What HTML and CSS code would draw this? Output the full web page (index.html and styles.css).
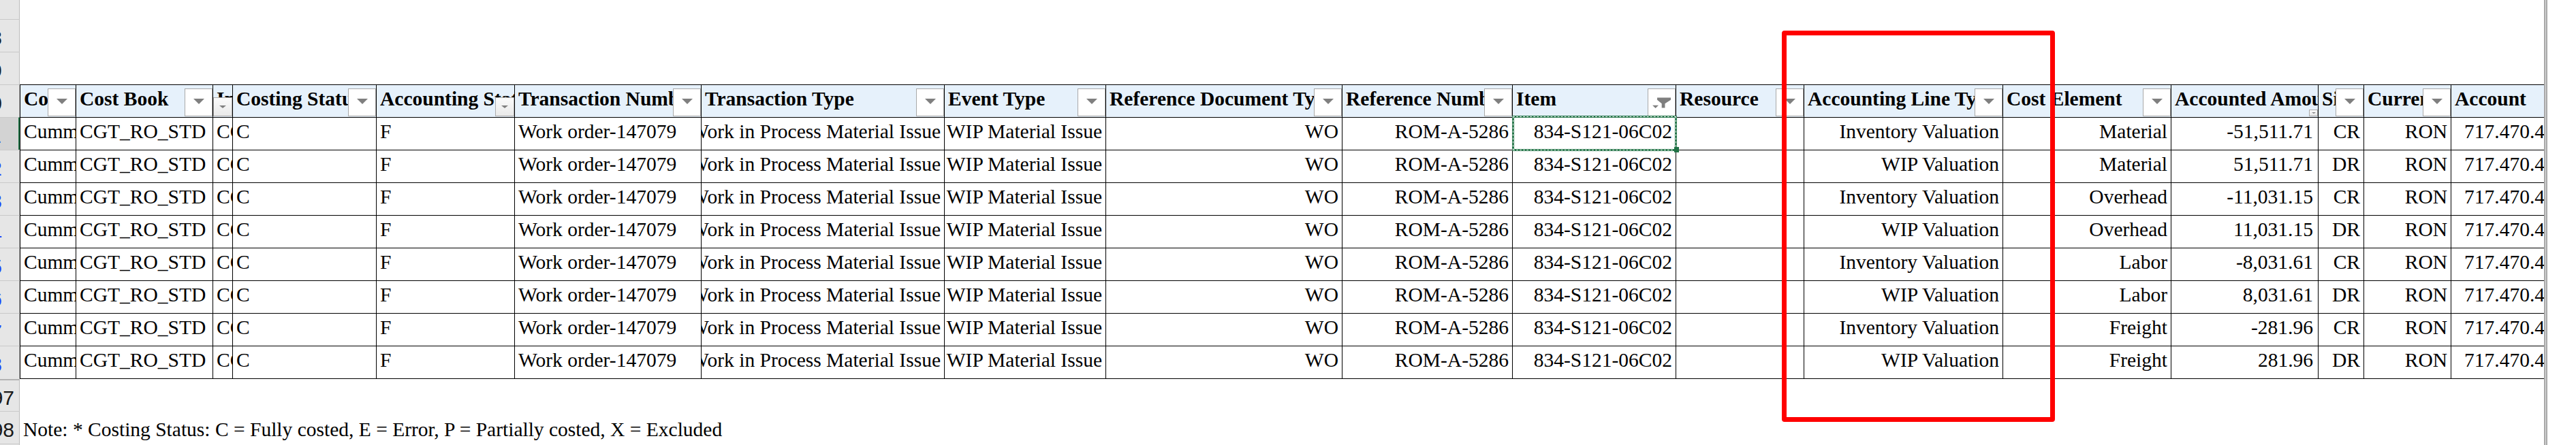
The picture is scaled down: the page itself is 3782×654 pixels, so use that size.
FILE: index.html
```html
<!DOCTYPE html>
<html lang="en">
<head>
<meta charset="utf-8">
<title>Cost Accounting Distributions</title>
<link rel="stylesheet" href="styles.css">
</head>
<body>
<div class="window">
  <div class="sheet">
    <div class="row top"><div class="rh"></div><div class="blank"></div></div>
    <div class="row"><div class="rh"><span>1088</span></div><div class="blank"></div></div>
    <div class="row"><div class="rh"><span>1089</span></div><div class="blank"></div></div>

    <div class="row thead">
      <div class="rh"><span>1090</span></div>
      <div class="c h a"><span>Cost Organization</span><span class="dd"></span></div>
      <div class="c h"><span>Cost Book</span><span class="dd"></span></div>
      <div class="c h"><span>Inventory Organization</span><span class="dd s"></span></div>
      <div class="c h"><span>Costing Status</span><span class="dd"></span></div>
      <div class="c h"><span>Accounting Status</span><span class="dd s"></span></div>
      <div class="c h"><span>Transaction Number</span><span class="dd"></span></div>
      <div class="c h"><span>Transaction Type</span><span class="dd"></span></div>
      <div class="c h"><span>Event Type</span><span class="dd"></span></div>
      <div class="c h"><span>Reference Document Type</span><span class="dd"></span></div>
      <div class="c h"><span>Reference Number</span><span class="dd"></span></div>
      <div class="c h"><span>Item</span><span class="dd fl"><svg viewBox="0 0 41 41" width="39" height="39"><path d="M13.7 13.2H34.7V16.6L25.7 22.4V28.8H20.7V22.4L13.7 16.6Z" fill="#7f7f7f"/><path d="M6.4 25H15.8L11.1 29.4Z" fill="#7f7f7f"/></svg></span></div>
      <div class="c h"><span>Resource</span><span class="dd"></span></div>
      <div class="c h"><span>Accounting Line Type</span><span class="dd"></span></div>
      <div class="c h"><span>Cost Element</span><span class="dd"></span></div>
      <div class="c h"><span>Accounted Amount</span><span class="dd t"></span></div>
      <div class="c h"><span>Side</span><span class="dd"></span></div>
      <div class="c h"><span>Currency</span><span class="dd"></span></div>
      <div class="c h"><span>Account</span></div>
    </div>

    <div class="row">
      <div class="rh f act"><span>1091</span></div>
      <div class="c a"><span>Cummins</span></div><div class="c"><span>CGT_RO_STD</span></div><div class="c"><span>CGT</span></div><div class="c"><span>C</span></div><div class="c"><span>F</span></div><div class="c"><span>Work order-147079</span></div>
      <div class="c r"><span>Work in Process Material Issue</span></div><div class="c r"><span>WIP Material Issue</span></div><div class="c r"><span>WO</span></div><div class="c r"><span>ROM-A-5286</span></div>
      <div class="c r sel"><span>834-S121-06C02</span><span class="ants"></span></div><div class="c"></div>
      <div class="c r"><span>Inventory Valuation</span></div><div class="c r"><span>Material</span></div><div class="c r amt"><span>-51,511.71</span></div><div class="c r"><span>CR</span></div><div class="c r"><span>RON</span></div><div class="c acct"><span>717.470.400</span></div>
    </div>
    <div class="row">
      <div class="rh f"><span>1092</span></div>
      <div class="c a"><span>Cummins</span></div><div class="c"><span>CGT_RO_STD</span></div><div class="c"><span>CGT</span></div><div class="c"><span>C</span></div><div class="c"><span>F</span></div><div class="c"><span>Work order-147079</span></div>
      <div class="c r"><span>Work in Process Material Issue</span></div><div class="c r"><span>WIP Material Issue</span></div><div class="c r"><span>WO</span></div><div class="c r"><span>ROM-A-5286</span></div>
      <div class="c r"><span>834-S121-06C02</span></div><div class="c"></div>
      <div class="c r"><span>WIP Valuation</span></div><div class="c r"><span>Material</span></div><div class="c r amt"><span>51,511.71</span></div><div class="c r"><span>DR</span></div><div class="c r"><span>RON</span></div><div class="c acct"><span>717.470.400</span></div>
    </div>
    <div class="row">
      <div class="rh f"><span>1093</span></div>
      <div class="c a"><span>Cummins</span></div><div class="c"><span>CGT_RO_STD</span></div><div class="c"><span>CGT</span></div><div class="c"><span>C</span></div><div class="c"><span>F</span></div><div class="c"><span>Work order-147079</span></div>
      <div class="c r"><span>Work in Process Material Issue</span></div><div class="c r"><span>WIP Material Issue</span></div><div class="c r"><span>WO</span></div><div class="c r"><span>ROM-A-5286</span></div>
      <div class="c r"><span>834-S121-06C02</span></div><div class="c"></div>
      <div class="c r"><span>Inventory Valuation</span></div><div class="c r"><span>Overhead</span></div><div class="c r amt"><span>-11,031.15</span></div><div class="c r"><span>CR</span></div><div class="c r"><span>RON</span></div><div class="c acct"><span>717.470.400</span></div>
    </div>
    <div class="row">
      <div class="rh f"><span>1094</span></div>
      <div class="c a"><span>Cummins</span></div><div class="c"><span>CGT_RO_STD</span></div><div class="c"><span>CGT</span></div><div class="c"><span>C</span></div><div class="c"><span>F</span></div><div class="c"><span>Work order-147079</span></div>
      <div class="c r"><span>Work in Process Material Issue</span></div><div class="c r"><span>WIP Material Issue</span></div><div class="c r"><span>WO</span></div><div class="c r"><span>ROM-A-5286</span></div>
      <div class="c r"><span>834-S121-06C02</span></div><div class="c"></div>
      <div class="c r"><span>WIP Valuation</span></div><div class="c r"><span>Overhead</span></div><div class="c r amt"><span>11,031.15</span></div><div class="c r"><span>DR</span></div><div class="c r"><span>RON</span></div><div class="c acct"><span>717.470.400</span></div>
    </div>
    <div class="row">
      <div class="rh f"><span>1095</span></div>
      <div class="c a"><span>Cummins</span></div><div class="c"><span>CGT_RO_STD</span></div><div class="c"><span>CGT</span></div><div class="c"><span>C</span></div><div class="c"><span>F</span></div><div class="c"><span>Work order-147079</span></div>
      <div class="c r"><span>Work in Process Material Issue</span></div><div class="c r"><span>WIP Material Issue</span></div><div class="c r"><span>WO</span></div><div class="c r"><span>ROM-A-5286</span></div>
      <div class="c r"><span>834-S121-06C02</span></div><div class="c"></div>
      <div class="c r"><span>Inventory Valuation</span></div><div class="c r"><span>Labor</span></div><div class="c r amt"><span>-8,031.61</span></div><div class="c r"><span>CR</span></div><div class="c r"><span>RON</span></div><div class="c acct"><span>717.470.400</span></div>
    </div>
    <div class="row">
      <div class="rh f"><span>1096</span></div>
      <div class="c a"><span>Cummins</span></div><div class="c"><span>CGT_RO_STD</span></div><div class="c"><span>CGT</span></div><div class="c"><span>C</span></div><div class="c"><span>F</span></div><div class="c"><span>Work order-147079</span></div>
      <div class="c r"><span>Work in Process Material Issue</span></div><div class="c r"><span>WIP Material Issue</span></div><div class="c r"><span>WO</span></div><div class="c r"><span>ROM-A-5286</span></div>
      <div class="c r"><span>834-S121-06C02</span></div><div class="c"></div>
      <div class="c r"><span>WIP Valuation</span></div><div class="c r"><span>Labor</span></div><div class="c r amt"><span>8,031.61</span></div><div class="c r"><span>DR</span></div><div class="c r"><span>RON</span></div><div class="c acct"><span>717.470.400</span></div>
    </div>
    <div class="row">
      <div class="rh f"><span>1097</span></div>
      <div class="c a"><span>Cummins</span></div><div class="c"><span>CGT_RO_STD</span></div><div class="c"><span>CGT</span></div><div class="c"><span>C</span></div><div class="c"><span>F</span></div><div class="c"><span>Work order-147079</span></div>
      <div class="c r"><span>Work in Process Material Issue</span></div><div class="c r"><span>WIP Material Issue</span></div><div class="c r"><span>WO</span></div><div class="c r"><span>ROM-A-5286</span></div>
      <div class="c r"><span>834-S121-06C02</span></div><div class="c"></div>
      <div class="c r"><span>Inventory Valuation</span></div><div class="c r"><span>Freight</span></div><div class="c r amt"><span>-281.96</span></div><div class="c r"><span>CR</span></div><div class="c r"><span>RON</span></div><div class="c acct"><span>717.470.400</span></div>
    </div>
    <div class="row last">
      <div class="rh f"><span>1098</span></div>
      <div class="c a"><span>Cummins</span></div><div class="c"><span>CGT_RO_STD</span></div><div class="c"><span>CGT</span></div><div class="c"><span>C</span></div><div class="c"><span>F</span></div><div class="c"><span>Work order-147079</span></div>
      <div class="c r"><span>Work in Process Material Issue</span></div><div class="c r"><span>WIP Material Issue</span></div><div class="c r"><span>WO</span></div><div class="c r"><span>ROM-A-5286</span></div>
      <div class="c r"><span>834-S121-06C02</span></div><div class="c"></div>
      <div class="c r"><span>WIP Valuation</span></div><div class="c r"><span>Freight</span></div><div class="c r amt"><span>281.96</span></div><div class="c r"><span>DR</span></div><div class="c r"><span>RON</span></div><div class="c acct"><span>717.470.400</span></div>
    </div>

    <div class="row after"><div class="rh wide gap"><span>1197</span></div><div class="blank"></div></div>
    <div class="row"><div class="rh wide"><span>1198</span></div><div class="note">Note: * Costing Status: C = Fully costed, E = Error, P = Partially costed, X = Excluded</div></div>
    <div class="row tail"><div class="rh"></div><div class="blank"></div></div>
  </div>
  <div class="splitter"></div>
  <div class="rest"></div>
  <div class="callout"></div>
</div>
</body>
</html>
```

FILE: styles.css
```css
html, body {
  margin: 0;
  padding: 0;
  background: #ffffff;
}

.window {
  position: relative;
  display: flex;
  width: 3782px;
  height: 654px;
  overflow: hidden;
  background: #ffffff;
}

.sheet {
  flex: none;
  width: 3735px;
  height: 654px;
  overflow: hidden;
}

.splitter {
  flex: none;
  width: 5px;
  box-sizing: border-box;
  border-left: 2px solid #a8a8a8;
  border-right: 2px solid #a8a8a8;
  background: #dedede;
}

.rest {
  flex: 1;
  background: #ffffff;
}

.row {
  display: grid;
  grid-template-columns: 29px 83px 201px 29px 211px 203px 274px 357px 237px 347px 250px 240px 188px 292px 247px 216px 67px 128px 200px;
  width: max-content;
  height: 48px;
}

.row.top { height: 28px; }
.row.last { height: 49px; }
.row.after { height: 47px; }
.row.tail { height: 10px; }

.blank { grid-column: 2 / -1; }

/* row headers */
.rh {
  box-sizing: border-box;
  display: flex;
  justify-content: flex-end;
  overflow: hidden;
  background: #e6e6e6;
  border-top: 1px solid #c9c9c9;
  border-right: 1px solid #bcbcbc;
  padding: 7px 25px 0 0;
  font-family: "Liberation Sans", Arial, sans-serif;
  font-size: 30px;
  line-height: 40px;
  color: #1a1a1a;
  white-space: nowrap;
}
.rh > span { flex: none; }
.row.top .rh { border-top: none; }
.rh.f { color: #1f3fff; }
.rh.act {
  background: #d3d3d3;
  border-right: 2px solid #217346;
}
.rh.wide { padding-right: 7px; }
.rh.gap { border-top: 2px solid #b3b3b3; padding-top: 6px; }

/* table cells */
.c {
  position: relative;
  box-sizing: border-box;
  display: flex;
  align-items: flex-start;
  overflow: hidden;
  white-space: nowrap;
  padding: 0 5px;
  border-top: 1px solid #000000;
  border-right: 1px solid #000000;
  font-family: "Liberation Serif", "Times New Roman", serif;
  font-size: 29.5px;
  line-height: 40px;
  color: #000000;
}
.c > span { flex: none; }
.c.a { border-left: 1px solid #000000; }
.c.r { justify-content: flex-end; }
.c.amt { padding-right: 7px; }
.c.acct { padding-left: 19px; }
.row.last .c { border-bottom: 1px solid #000000; }

.c.h {
  background: #e6f1fb;
  font-weight: bold;
}

/* filter drop-down buttons */
.dd {
  position: absolute;
  right: 0;
  bottom: 1px;
  box-sizing: border-box;
  width: 41px;
  height: 41px;
  display: flex;
  justify-content: center;
  align-items: flex-start;
  padding-top: 14px;
  background: #ffffff;
  border: 1px solid #a9a9a9;
}
.dd::before {
  content: "";
  width: 0;
  height: 0;
  border-left: 8px solid transparent;
  border-right: 8px solid transparent;
  border-top: 8px solid #7f7f7f;
}
.dd.s {
  width: 28px;
  height: 28px;
  padding-top: 11px;
  background: linear-gradient(#fbfbfb, #e9e9e9);
  border-color: #acacac;
}
.dd.s::before {
  border-left-width: 5px;
  border-right-width: 5px;
  border-top-width: 4px;
}
.dd.t {
  width: 13px;
  height: 10px;
  padding-top: 3px;
  background: linear-gradient(#fbfbfb, #e6e6e6);
  border-color: #a9a9a9;
}
.dd.t::before {
  border-left-width: 3px;
  border-right-width: 3px;
  border-top-width: 2px;
}
.dd.fl { padding: 0; }
.dd.fl::before { content: none; }
.dd.fl svg { display: block; }

/* active cell copy selection */
.c.sel { overflow: visible; }
.ants {
  position: absolute;
  left: -1px;
  top: -3px;
  right: -2px;
  bottom: -2px;
  z-index: 2;
  border: 3px solid #217346;
}
.ants::before {
  content: "";
  position: absolute;
  left: -2px;
  top: -2px;
  right: -2px;
  bottom: -2px;
  border: 1px dashed #ffffff;
}
.ants::after {
  content: "";
  position: absolute;
  right: -6px;
  bottom: -5px;
  width: 7px;
  height: 8px;
  background: #217346;
}

/* footnote */
.note {
  grid-column: 2 / -1;
  padding: 10px 0 0 5px;
  font-family: "Liberation Serif", "Times New Roman", serif;
  font-size: 29.5px;
  line-height: 35px;
  white-space: nowrap;
  color: #000000;
}

/* red annotation frame */
.callout {
  position: absolute;
  left: 2616px;
  top: 45px;
  width: 401px;
  height: 575px;
  box-sizing: border-box;
  border: 7px solid #ff0000;
  border-radius: 4px;
  pointer-events: none;
}
```
